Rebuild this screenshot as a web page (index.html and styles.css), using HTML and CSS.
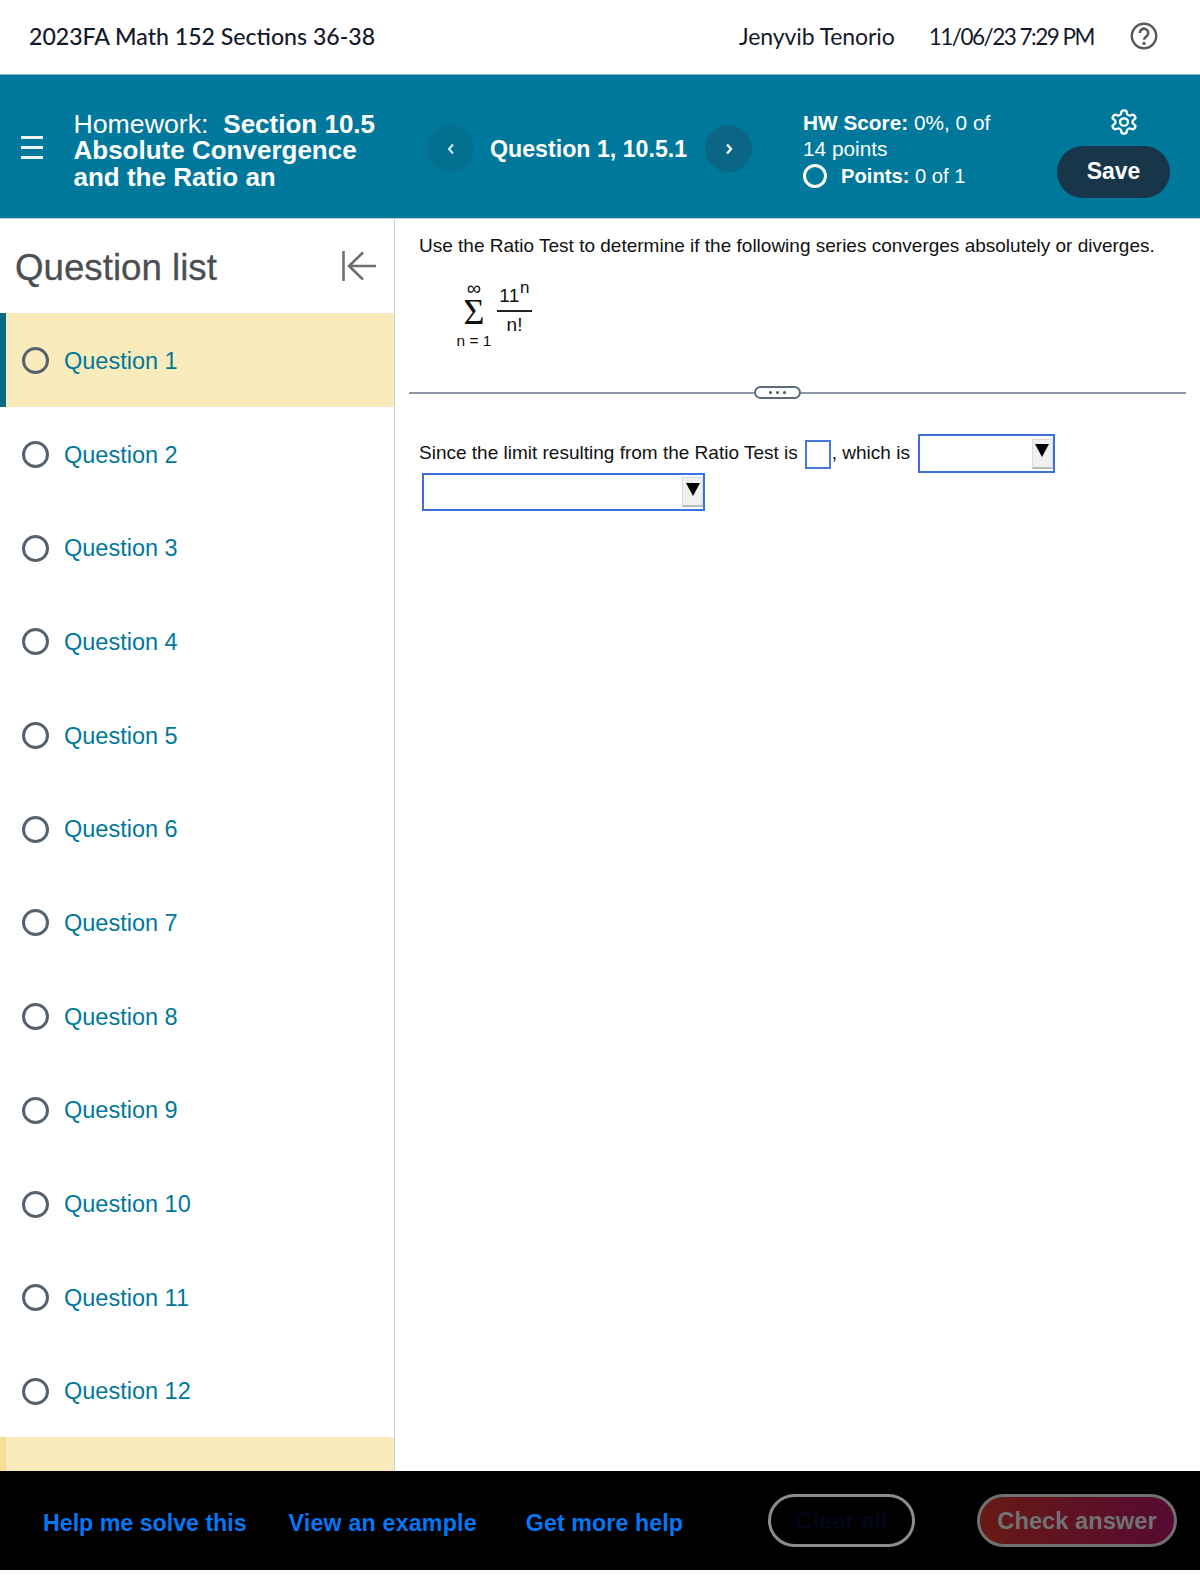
FILE: index.html
```html
<!DOCTYPE html>
<html lang="en">
<head>
<meta charset="utf-8">
<title>Homework: Section 10.5</title>
<link rel="stylesheet" href="styles.css">
</head>
<body>
<div class="page">
  <header class="topbar">
    <div class="course">2023FA Math 152 Sections 36-38</div>
    <div class="user">Jenyvib Tenorio</div>
    <div class="date">11/06/23 7:29 PM</div>
    <svg class="help" viewBox="0 0 28 28" width="28" height="28"><circle cx="14" cy="14" r="12.2" fill="none" stroke="#55595c" stroke-width="2.4"/><path d="M9.8 11a4.2 4.2 0 1 1 6.7 3.3c-1.6 1-2.5 1.7-2.5 3.5" fill="none" stroke="#55595c" stroke-width="2.6"/><circle cx="14" cy="21.4" r="1.6" fill="#55595c"/></svg>
  </header>
  <section class="hwbar">
    <div class="menu"><span></span><span></span><span></span></div>
    <div class="hwtitle"><span>Homework:&nbsp;</span> <b>Section 10.5</b> <b>Absolute Convergence</b> <b>and the Ratio an</b></div>
    <div class="qnav">
      <div class="navbtn prev"><svg viewBox="0 0 10 14" width="10" height="14"><path d="M7 2.5 3 7l4 4.5" fill="none" stroke="#cfe3ea" stroke-width="2.2"/></svg></div>
      <div class="qname">Question 1, 10.5.1</div>
      <div class="navbtn next"><svg viewBox="0 0 10 14" width="10" height="14"><path d="M3 2.5 7 7l-4 4.5" fill="none" stroke="#fff" stroke-width="2.4"/></svg></div>
    </div>
    <div class="score">
      <div><b>HW Score:</b> 0%, 0 of<br>14 points</div>
      <div class="points"><span class="ring"></span><span><b>Points:</b> 0 of 1</span></div>
    </div>
    <div class="actions">
      <svg class="gear" viewBox="0 0 24 24" width="30" height="28" preserveAspectRatio="none"><path d="M12.22 2h-.44a2 2 0 0 0-2 2v.18a2 2 0 0 1-1 1.73l-.43.25a2 2 0 0 1-2 0l-.15-.08a2 2 0 0 0-2.73.73l-.22.38a2 2 0 0 0 .73 2.73l.15.1a2 2 0 0 1 1 1.72v.51a2 2 0 0 1-1 1.74l-.15.09a2 2 0 0 0-.73 2.73l.22.38a2 2 0 0 0 2.73.73l.15-.08a2 2 0 0 1 2 0l.43.25a2 2 0 0 1 1 1.73V20a2 2 0 0 0 2 2h.44a2 2 0 0 0 2-2v-.18a2 2 0 0 1 1-1.73l.43-.25a2 2 0 0 1 2 0l.15.08a2 2 0 0 0 2.73-.73l.22-.39a2 2 0 0 0-.73-2.73l-.15-.08a2 2 0 0 1-1-1.74v-.5a2 2 0 0 1 1-1.74l.15-.09a2 2 0 0 0 .73-2.73l-.22-.38a2 2 0 0 0-2.73-.73l-.15.08a2 2 0 0 1-2 0l-.43-.25a2 2 0 0 1-1-1.73V4a2 2 0 0 0-2-2z" fill="none" stroke="#fff" stroke-width="1.9"/><circle cx="12" cy="12" r="3.2" fill="none" stroke="#fff" stroke-width="1.9"/></svg>
      <div class="save">Save</div>
    </div>
  </section>
  <main class="content">
    <aside class="sidebar">
      <div class="sidehead">
        <h2>Question list</h2>
        <svg class="collapse" viewBox="0 0 34 30" width="34" height="30"><path d="M1.5 0v30M34 15H7M21 1.5 7 15l14 13.5" fill="none" stroke="#6b6f73" stroke-width="2.6"/></svg>
      </div>
      <ul class="qlist">
        <li class="qrow current"><span class="circle"></span>Question 1</li>
        <li class="qrow"><span class="circle"></span>Question 2</li>
        <li class="qrow"><span class="circle"></span>Question 3</li>
        <li class="qrow"><span class="circle"></span>Question 4</li>
        <li class="qrow"><span class="circle"></span>Question 5</li>
        <li class="qrow"><span class="circle"></span>Question 6</li>
        <li class="qrow"><span class="circle"></span>Question 7</li>
        <li class="qrow"><span class="circle"></span>Question 8</li>
        <li class="qrow"><span class="circle"></span>Question 9</li>
        <li class="qrow"><span class="circle"></span>Question 10</li>
        <li class="qrow"><span class="circle"></span>Question 11</li>
        <li class="qrow"><span class="circle"></span>Question 12</li>
        <li class="qrow faded"></li>
      </ul>
    </aside>
    <div class="work">
      <p class="prompt">Use the Ratio Test to determine if the following series converges absolutely or diverges.</p>
      <div class="formula">
        <div class="sum">
          <span class="lim inf">∞</span>
          <span class="sigma">Σ</span>
          <span class="lim low">n = 1</span>
        </div>
        <div class="frac">
          <span class="num">11<sup>n</sup></span>
          <span class="den">n!</span>
        </div>
      </div>
      <div class="divider"><span class="line lead"></span><span class="pill"><i></i><i></i><i></i></span><span class="line"></span></div>
      <div class="answer">
        <div class="answerline">
          <span class="atext">Since the limit resulting from the Ratio Test is</span>
          <span class="box"></span>
          <span class="atext comma">, which is</span>
          <span class="select sel1"><span class="arrow"></span></span>
        </div>
        <span class="select sel2"><span class="arrow"></span></span>
      </div>
    </div>
  </main>
  <footer class="footer">
    <a class="flink">Help me solve this</a>
    <a class="flink view">View an example</a>
    <a class="flink more">Get more help</a>
    <div class="btn clear">Clear all</div>
    <div class="btn check">Check answer</div>
  </footer>
</div>
</body>
</html>
```
FILE: styles.css
```css
* { box-sizing: border-box; }
html, body { margin: 0; padding: 0; background: #fff; }
.page { width: 1200px; height: 1578px; display: flex; flex-direction: column; padding-bottom: 8px; font-family: "Liberation Sans", Arial, sans-serif; overflow: hidden; }

.topbar { height: 75px; flex: none; display: flex; align-items: center; padding: 0 42px 2px 29px; color: #14192b; font-family: "Lato", sans-serif; border-bottom: 1px solid #8dbccb; }
.course { font-size: 23.1px; font-weight: 500; margin-right: auto; }
.user { font-size: 23px; letter-spacing: -0.1px; margin-right: 34px; }
.date { font-size: 22.5px; letter-spacing: -1.5px; margin-right: 36px; }
.help { flex: none; }

.hwbar { height: 144px; flex: none; background: #00789c; color: #fff; display: flex; align-items: center; padding-top: 8px; border-bottom: 1px solid #bcd0dc; }
.menu { width: 22px; margin-left: 21px; margin-top: -6px; display: flex; flex-direction: column; gap: 7.5px; }
.menu span { height: 2.4px; background: #e8f3f6; }
.hwtitle { width: 320px; margin-left: 30.5px; font-size: 26.7px; line-height: 26.5px; }
.hwtitle b { font-weight: 700; font-size: 26px; }
.qnav { display: flex; align-items: center; margin-left: 33.5px; margin-top: -4px; }
.navbtn { width: 47px; height: 47px; border-radius: 50%; display: flex; align-items: center; justify-content: center; }
.prev { background: #04708f; }
.next { background: #0a6684; }
.qname { font-size: 23.2px; font-weight: 700; width: 231px; padding: 2px 0 0 16px; }
.score { width: 222px; margin-left: 51px; margin-top: -2px; font-size: 20.8px; line-height: 26.5px; }
.points { display: flex; align-items: center; gap: 14px; font-size: 20.2px; }
.ring { width: 24px; height: 24px; border: 3.5px solid #fff; border-radius: 50%; flex: none; }
.actions { width: 113px; margin-left: 32px; margin-top: 12px; display: flex; flex-direction: column; align-items: center; }
.gear { display: block; margin-left: 20px; margin-top: -7px; margin-bottom: 9.5px; }
.save { width: 113px; height: 52px; border-radius: 26px; background: #17364a; font-size: 23px; font-weight: 700; display: flex; align-items: center; justify-content: center; }

.content { flex: 1; min-height: 0; display: flex; }
.sidebar { width: 395px; flex: none; border-right: 1px solid #c5d2e0; overflow: hidden; }
.sidehead { height: 94px; display: flex; align-items: center; justify-content: space-between; padding: 4px 18px 0 15px; }
.sidehead h2 { margin: 0; font-size: 36.7px; font-weight: 400; color: #4c4f52; -webkit-text-stroke: 0.3px #4c4f52; }
.collapse { margin-top: -4px; }
.qlist { list-style: none; margin: 0; padding: 0; }
.qrow { height: 93.7px; display: flex; align-items: center; gap: 15px; padding: 3px 0 0 22px; color: #00789c; font-size: 23.5px; }
.circle { width: 27px; height: 27px; border-radius: 50%; border: 3px solid #56626e; flex: none; margin-top: -1px; }
.current { background: #f9ebbb; border-left: 6px solid #0a6a86; padding-left: 16px; }
.faded { background: #f9ebbb; border-left: 6px solid #f6de96; }

.work { flex: 1; min-width: 0; padding: 14px 14px 0 14px; color: #111; }
.prompt { margin: 0 0 0 10px; font-size: 19px; line-height: 26px; }
.formula { display: flex; align-items: center; gap: 2px; margin: 13px 0 0 44px; height: 84px; }
.sum { width: 42px; margin-top: 4px; display: flex; flex-direction: column; align-items: center; font-size: 15.5px; }
.lim { line-height: 18px; }
.low { line-height: 22px; }
.inf { font-size: 20px; line-height: 14px; }
.sigma { font-family: "Liberation Serif", serif; font-size: 36px; line-height: 35px; }
.frac { width: 35px; display: flex; flex-direction: column; align-items: center; font-size: 19px; margin-top: -10px; }
.num { border-bottom: 2px solid #222; width: 100%; text-align: center; line-height: 27px; height: 30px; letter-spacing: 0.5px; }
.num sup { font-size: 17px; line-height: 0; vertical-align: 9px; }
.den { line-height: 25px; }

.divider { display: flex; align-items: center; margin: 30px 0 0 0; }
.line { flex: 1; height: 2px; background: #8f97a8; }
.lead { flex: none; width: 345px; }
.pill { width: 47px; height: 13px; border: 2px solid #5b6b7b; border-radius: 7px; display: flex; align-items: center; justify-content: center; gap: 4px; }
.pill i { width: 3px; height: 3px; border-radius: 50%; background: #4a5563; }

.answer { margin: 35px 0 0 10px; font-size: 19px; }
.answerline { display: flex; align-items: center; height: 39px; }
.atext { margin-top: -2px; }
.box { width: 26px; height: 29px; border: 2px solid #4a78d8; margin-left: 7px; margin-top: 1px; }
.comma { margin-left: 1px; margin-right: 8px; }
.select { display: flex; justify-content: flex-end; align-items: center; border: 2px solid #3f70d8; background: #fff; }
.sel1 { width: 137px; height: 39px; }
.sel2 { width: 283px; height: 38px; margin-left: 3px; }
.arrow { width: 21px; height: 30px; background: #f0f0f0; border: 1px solid #dcdcdc; border-bottom: 2px solid #bbb; display: flex; align-items: center; justify-content: center; }
.arrow::after { content: ""; border-left: 7px solid transparent; border-right: 7px solid transparent; border-top: 13px solid #000; margin-top: -5px; }

.footer { height: 99px; flex: none; background: #000; display: flex; align-items: center; padding: 0 23px 0 43px; position: relative; z-index: 1; }
.flink { color: #0477f5; font-size: 23.2px; font-weight: 700; margin-right: 42px; padding-top: 5px; }
.flink.view { letter-spacing: 0.2px; }
.flink.more { margin-left: 7px; margin-right: 0; letter-spacing: 0.1px; }
.btn { height: 53px; border-radius: 27px; font-size: 23.7px; font-weight: 700; padding-top: 1px; display: flex; align-items: center; justify-content: center; }
.clear { width: 147px; margin-left: auto; border: 3px solid #8c8c8c; color: #020617; }
.check { width: 200px; margin-left: 62px; border: 3px solid #707070; color: #727272; background: linear-gradient(90deg, #671a14, #560a32); }
```
